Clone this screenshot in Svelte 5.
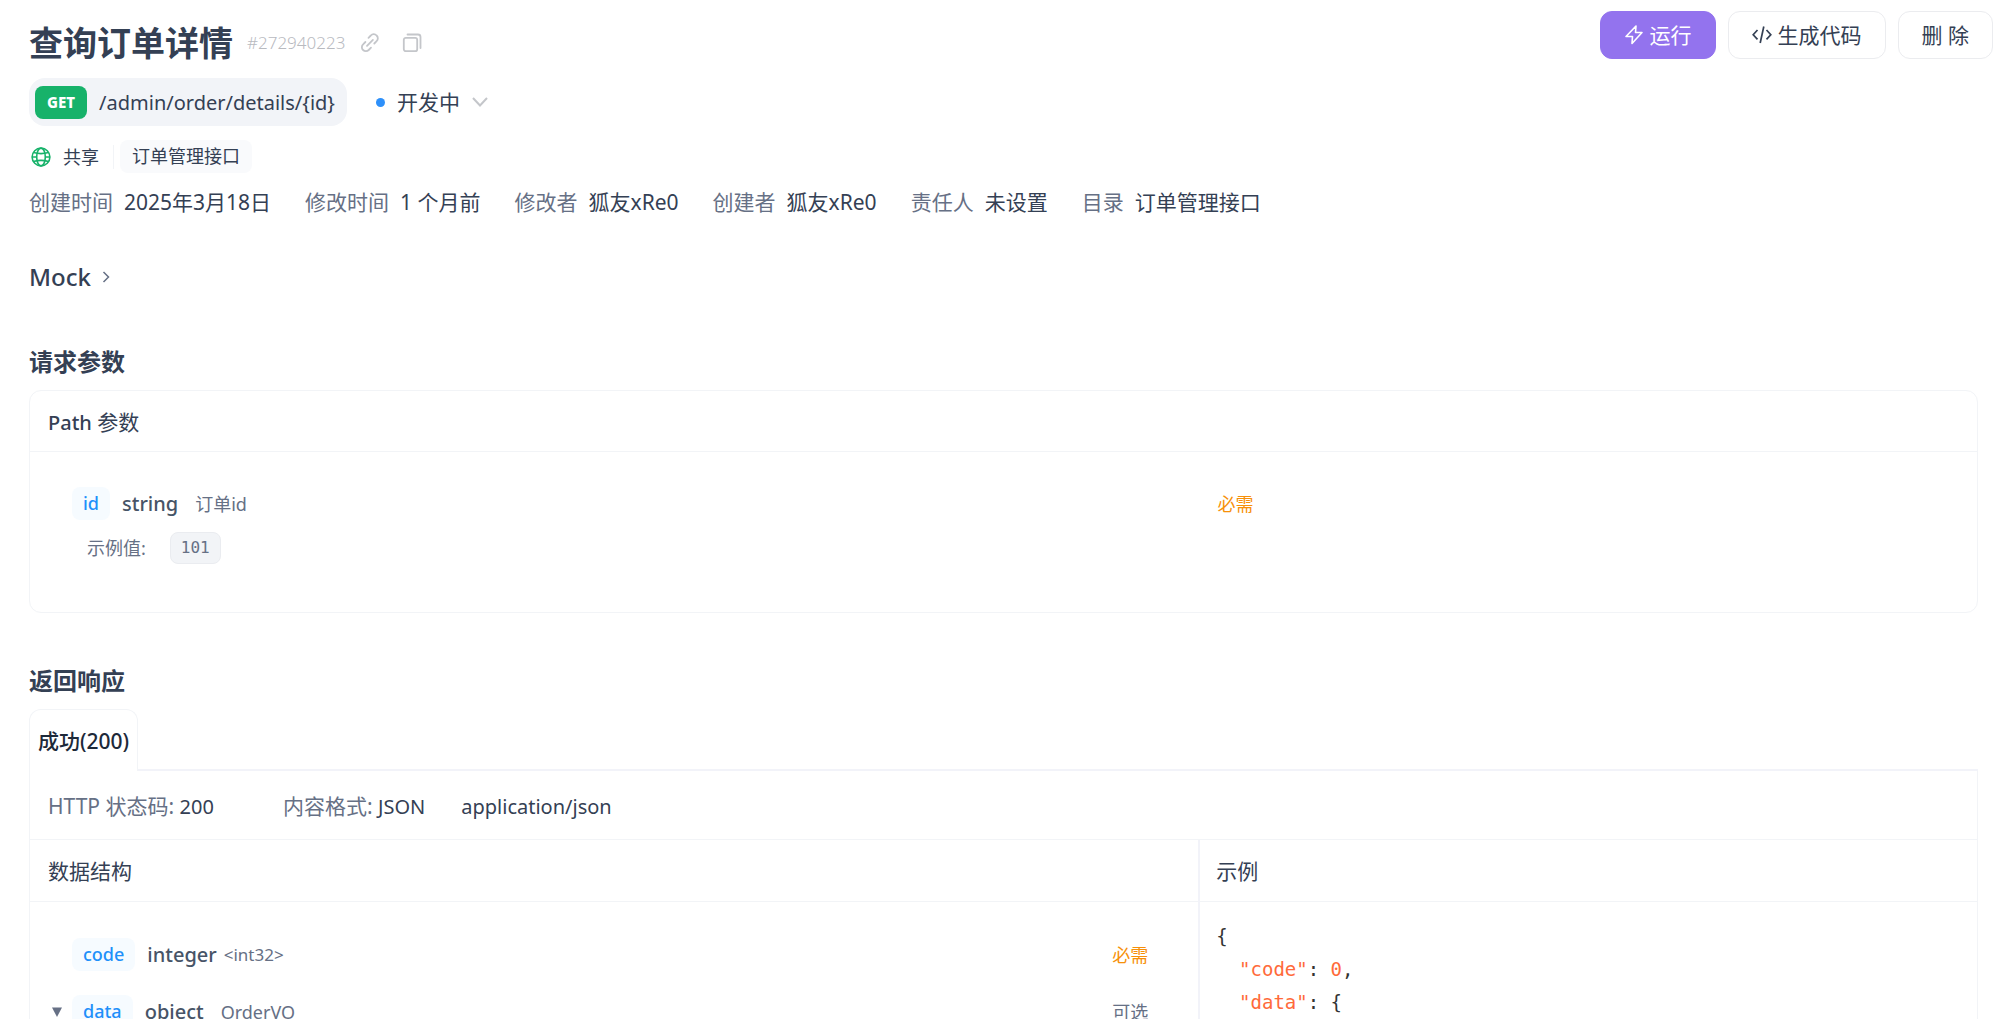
<script lang="ts">
  let status = $state('开发中');
  let mockOpen = $state(false);
  let dataOpen = $state(true);

  const statuses = ['开发中', '测试中', '已发布'];

  const meta = [
    { label: '创建时间', value: '2025年3月18日' },
    { label: '修改时间', value: '1 个月前' },
    { label: '修改者', value: '狐友xRe0' },
    { label: '创建者', value: '狐友xRe0' },
    { label: '责任人', value: '未设置' },
    { label: '目录', value: '订单管理接口' }
  ];
</script>

<svelte:head>
  <title>查询订单详情</title>
</svelte:head>

<div class="page">
  <header class="top">
    <div class="title-row">
      <h1>查询订单详情</h1>
      <span class="api-id">#272940223</span>
      <button class="icon-btn" aria-label="复制链接">
        <svg width="20" height="20" viewBox="0 0 20 20" fill="none" stroke="currentColor" stroke-width="1.8" stroke-linecap="round" stroke-linejoin="round">
          <path d="M8.500 4.800l2.300-2.300a3.900 3.900 0 0 1 5.800 0a3.900 3.900 0 0 1 0 5.700L14.300 10.500M11 14.700l-2.300 2.300a3.900 3.900 0 0 1-5.600 0a3.900 3.900 0 0 1 0-5.700L5.400 9M7 12.800l5.900-5.900" />
        </svg>
      </button>
      <button class="icon-btn" aria-label="复制">
        <svg width="20" height="20" viewBox="0 0 20 20" fill="none" stroke="currentColor" stroke-width="1.8" stroke-linecap="round" stroke-linejoin="round">
          <rect x="1.800" y="4.800" width="13.400" height="13.400" rx="2" />
          <path d="M5.500 1.500H16a2.500 2.500 0 0 1 2.500 2.500V15" />
        </svg>
      </button>
    </div>
    <div class="actions">
      <button class="btn primary">
        <svg width="20" height="20" viewBox="0 0 20 20" fill="none" stroke="currentColor" stroke-width="1.6" stroke-linejoin="round">
          <path d="M12 1L2 11.500h6.500L8 18.500l10-11h-6.500z" />
        </svg>
        运行
      </button>
      <button class="btn">
        <svg width="20" height="20" viewBox="0 0 20 20" fill="none" stroke="currentColor" stroke-width="1.7">
          <path d="M5.500 5L1.200 9.700l4.300 4.700M14.500 5l4.300 4.700l-4.300 4.700M11.800 1.500L8.200 18" />
        </svg>
        生成代码
      </button>
      <button class="btn">删 除</button>
    </div>
  </header>

  <div class="endpoint">
    <div class="path-pill">
      <span class="method">GET</span>
      <span class="path">/admin/order/details/&#123;id&#125;</span>
    </div>
    <div class="status">
      <span class="dot"></span>
      <select aria-label="接口状态" bind:value={status}>
        {#each statuses as s}
          <option value={s}>{s}</option>
        {/each}
      </select>
      <svg width="16" height="10" viewBox="0 0 16 10" fill="none" stroke="currentColor" stroke-width="2">
        <path d="M1 1l7 7.500L15 1" />
      </svg>
    </div>
  </div>

  <div class="share">
    <svg width="20" height="20" viewBox="0 0 20 20" fill="none" stroke="currentColor" stroke-width="1.600">
      <circle cx="10" cy="10" r="8.900" />
      <ellipse cx="10" cy="10" rx="4.300" ry="8.900" />
      <path d="M2.500 5.500c4.500 1.300 10.500 1.300 15 0M2.500 14.500c4.500-1.300 10.500-1.300 15 0M1 10h4.700M14.300 10H19" />
    </svg>
    <span class="share-text">共享</span>
    <span class="sep"></span>
    <span class="tag">订单管理接口</span>
  </div>

  <dl class="meta">
    {#each meta as item}
      <div class="meta-item">
        <dt>{item.label}</dt>
        <dd>{item.value}</dd>
      </div>
    {/each}
  </dl>

  <button class="mock" aria-expanded={mockOpen} onclick={() => (mockOpen = !mockOpen)}>
    Mock
    <svg width="8" height="12" viewBox="0 0 8 12" fill="none" stroke="currentColor" stroke-width="1.500">
      <path d="M1.500 1l5 5l-5 5" />
    </svg>
  </button>

  <h2>请求参数</h2>
  <section class="card">
    <h3><span class="strong">Path</span> 参数</h3>
    <div class="params">
      <div class="param">
        <div class="line">
          <span class="chip">id</span>
          <span class="type">string</span>
          <span class="desc">订单id</span>
        </div>
        <span class="required">必需</span>
      </div>
      <div class="example">
        <span>示例值:</span>
        <code>101</code>
      </div>
    </div>
  </section>

  <h2>返回响应</h2>
  <div class="tabs" role="tablist">
    <button class="tab" role="tab" aria-selected="true">成功(200)</button>
    <div class="tab-rest"></div>
  </div>
  <section class="response">
    <div class="http">
      <span>HTTP 状态码: <b>200</b></span>
      <span class="format">内容格式: <b>JSON</b></span>
      <span><b>application/json</b></span>
    </div>
    <div class="split">
      <div class="schema">
        <h3>数据结构</h3>
        <div class="fields">
          <div class="field">
            <span class="toggle"></span>
            <span class="chip">code</span>
            <span class="type">integer</span>
            <span class="int">&lt;int32&gt;</span>
            <span class="required">必需</span>
          </div>
          <div class="field">
            <button class="toggle" aria-label="展开 data" aria-expanded={dataOpen} onclick={() => (dataOpen = !dataOpen)}>
              <svg width="10" height="10" viewBox="0 0 10 10" fill="currentColor">
                <path d="M0 0.500h10L5 10z" />
              </svg>
            </button>
            <span class="chip">data</span>
            <span class="type">object</span>
            <span class="desc">OrderVO</span>
            <span class="optional">可选</span>
          </div>
        </div>
      </div>
      <div class="sample">
        <h3>示例</h3>
        <div class="json">
          <div>&#123;</div>
          <div class="indent"><i>"code"</i>: <i>0</i>,</div>
          <div class="indent"><i>"data"</i>: &#123;</div>
        </div>
      </div>
    </div>
  </section>
</div>

<style>
  :global(body) {
    background: #fff;
  }

  .page {
    box-sizing: border-box;
    height: 100vh;
    overflow: hidden;
    padding: 11px 20px 0 29px;
    font-family: 'Noto Sans', 'Noto Sans CJK SC', sans-serif;
    font-size: 21px;
    line-height: 32px;
    color: #344054;
  }

  button,
  select {
    font: inherit;
    color: inherit;
    background: none;
    border: 0;
    padding: 0;
    cursor: pointer;
  }

  svg {
    flex: none;
  }

  h1,
  h2,
  h3,
  dl,
  dd {
    margin: 0;
  }

  .top {
    display: flex;
    justify-content: space-between;
    height: 67px;
    margin-right: -15px;
  }

  .title-row {
    display: flex;
    align-items: center;
    height: 64px;
  }

  h1 {
    font-size: 34px;
    line-height: 48px;
    font-weight: 700;
  }

  .api-id {
    margin-left: 14px;
    font-size: 17px;
    font-weight: 300;
    color: #b8babf;
  }

  .icon-btn {
    display: flex;
    margin-left: 15px;
    color: #c4c6ca;
  }

  .icon-btn + .icon-btn {
    margin-left: 22px;
  }

  .actions {
    display: flex;
    gap: 12px;
  }

  .btn {
    display: flex;
    align-items: center;
    gap: 6px;
    box-sizing: border-box;
    height: 48px;
    padding: 0 23px;
    border: 1px solid #ebecef;
    border-radius: 12px;
  }

  .btn.primary {
    color: #fff;
    background: #9373ee;
    border-color: #9373ee;
  }

  .endpoint {
    display: flex;
    align-items: center;
  }

  .path-pill {
    display: flex;
    align-items: center;
    gap: 12px;
    box-sizing: border-box;
    height: 48px;
    padding: 0 12px 0 6px;
    border-radius: 16px;
    background: #f2f4f8;
  }

  .method {
    padding: 0 12px;
    border-radius: 8px;
    font-size: 15px;
    line-height: 33px;
    font-weight: 800;
    color: #fff;
    background: #17b26a;
  }

  .path {
    padding-top: 2px;
    font-size: 20px;
  }

  .status {
    display: flex;
    align-items: center;
    margin-left: 29px;
  }

  .dot {
    width: 9px;
    height: 9px;
    margin-right: 12px;
    border-radius: 50%;
    background: #2e90fa;
  }

  .status select {
    appearance: none;
    margin-right: 12px;
  }

  .status svg {
    color: #c4c6ca;
  }

  .share {
    display: flex;
    align-items: center;
    height: 33px;
    margin-top: 14px;
    padding-left: 2px;
    font-size: 18px;
    color: #17b26a;
  }

  .share-text {
    margin: 0 14px 0 12px;
    color: #344054;
  }

  .sep {
    width: 1px;
    height: 24px;
    margin-right: 6px;
    background: #f2f4f7;
  }

  .tag {
    padding: 0 12px;
    border-radius: 8px;
    line-height: 33px;
    color: #344054;
    background: #f9fafc;
  }

  .meta {
    display: flex;
    gap: 34px;
    margin-top: 13px;
  }

  .meta-item {
    display: flex;
    gap: 11px;
    white-space: nowrap;
  }

  dt {
    color: #667085;
  }

  .mock {
    display: flex;
    align-items: center;
    gap: 11px;
    margin-top: 42px;
    font-size: 24px;
    line-height: 34px;
    font-weight: 500;
  }

  .mock svg {
    color: #667085;
  }

  h2 {
    margin: 52px 0 12px;
    font-size: 24px;
    line-height: 32px;
    font-weight: 700;
  }

  .card {
    border: 1px solid #f2f4f7;
    border-radius: 12px;
  }

  h3 {
    padding: 15px 18px 14px;
    border-bottom: 1px solid #f2f4f7;
    font-size: 21px;
    font-weight: 400;
  }

  .strong {
    font-size: 20px;
    line-height: 20px;
    font-weight: 500;
  }

  .card h3 {
    padding-bottom: 13px;
  }

  .params {
    padding: 35px 16px 48px 42px;
  }

  .param {
    display: grid;
    grid-template-columns: 3fr 2fr;
    gap: 30px;
    align-items: center;
  }

  .line {
    display: flex;
    align-items: center;
  }

  .chip {
    margin-right: 12px;
    padding: 0 11px;
    border-radius: 8px;
    font-size: 18px;
    line-height: 33px;
    font-weight: 500;
    color: #1e90fa;
    background: #f6fbff;
  }

  .type {
    font-size: 20px;
    font-weight: 500;
    color: #475467;
  }

  .desc,
  .int,
  .optional,
  .required {
    font-size: 18px;
    color: #667085;
  }

  .desc {
    margin-left: 17px;
  }

  .int {
    margin-left: 7px;
    font-size: 17px;
  }

  .required {
    color: #f79009;
  }

  .example {
    display: flex;
    align-items: center;
    gap: 24px;
    margin-top: 12px;
    padding-left: 15px;
    font-size: 18px;
    color: #667085;
  }

  .example code {
    padding: 0 10px;
    border: 1px solid #eaecf0;
    border-radius: 8px;
    font: 16px/30px 'DejaVu Sans Mono', monospace;
    background: #f2f4f7;
  }

  .tabs {
    display: flex;
  }

  .tab {
    box-sizing: border-box;
    height: 62px;
    padding: 0 8px;
    border: 1px solid #f2f4f7;
    border-bottom: 0;
    border-radius: 12px 12px 0 0;
    font-weight: 500;
    color: #1d2939;
  }

  .tab-rest {
    flex: 1;
    border-bottom: 2px solid #f2f3f9;
  }

  .response {
    border: solid #f2f4f7;
    border-width: 0 1px;
  }

  .http {
    display: flex;
    padding: 19px 18px 17px;
    border-bottom: 1px solid #f2f4f7;
    color: #667085;
  }

  .http b {
    font-size: 20px;
    line-height: 20px;
    font-weight: 400;
    color: #344054;
  }

  .format {
    margin: 0 36px 0 69px;
  }

  .split {
    display: grid;
    grid-template-columns: calc(60% + 2px) 1fr;
  }

  .schema {
    border-right: 2px solid #f2f3f9;
  }

  .fields {
    display: grid;
    gap: 24px;
    padding: 36px 50px 24px 22px;
  }

  .field {
    display: flex;
    align-items: center;
  }

  .field .required,
  .optional {
    margin-left: auto;
  }

  .toggle {
    display: flex;
    width: 20px;
    color: #667085;
  }

  .sample h3 {
    padding-left: 16px;
  }

  .json {
    padding: 18px 16px;
    font: 19px/33px 'DejaVu Sans Mono', monospace;
    color: #333;
  }

  .json .indent {
    padding-left: 2ch;
  }

  .json i {
    font-style: normal;
    color: #ff6a3a;
  }
</style>
